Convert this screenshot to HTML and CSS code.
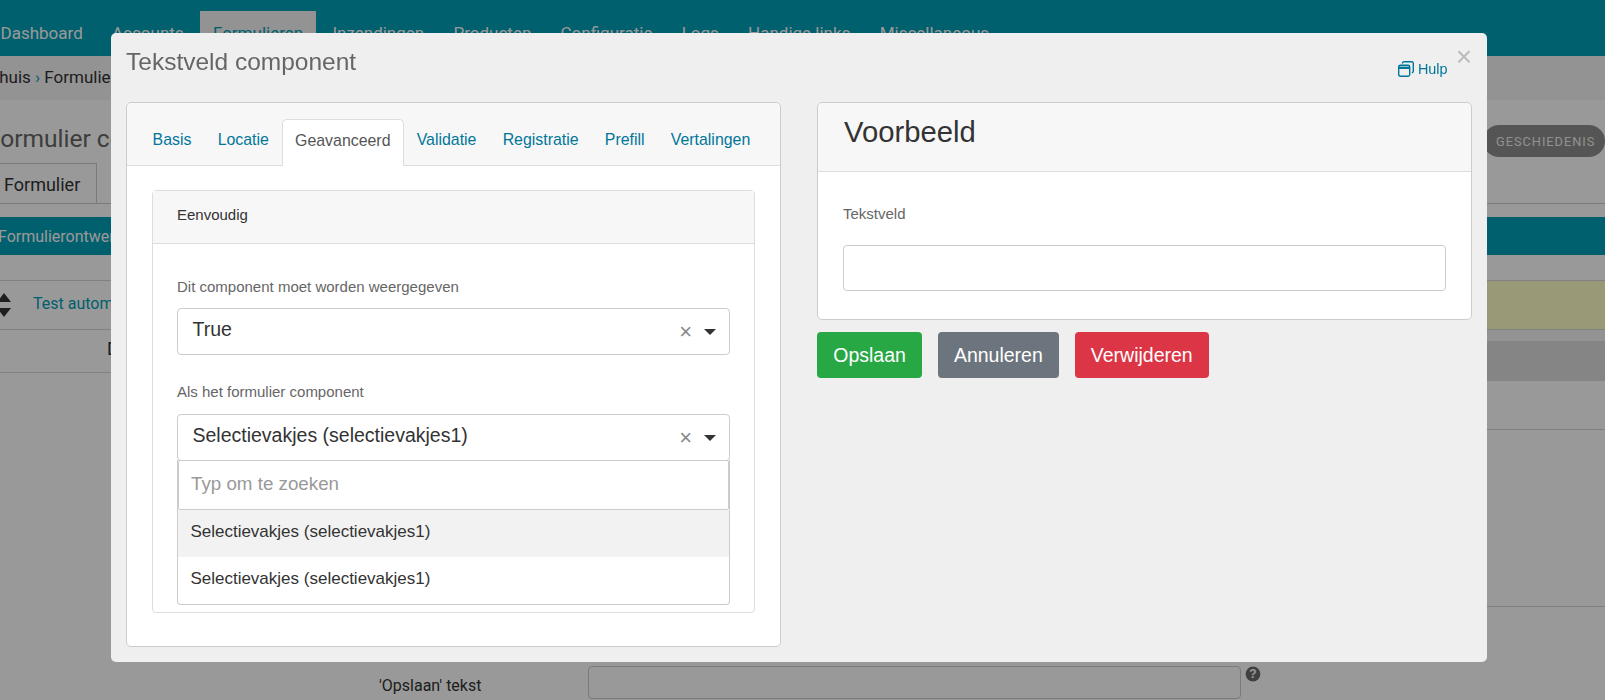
FILE: index.html
```html
<!DOCTYPE html>
<html lang="nl">
<head>
<meta charset="utf-8">
<title>Tekstveld component</title>
<link rel="stylesheet" href="styles.css">
</head>
<body>
<div class="page">
  <nav class="topnav">
    <a>Dashboard</a><a>Accounts</a><a class="active">Formulieren</a><a>Inzendingen</a><a>Producten</a><a>Configuratie</a><a>Logs</a><a>Handige links</a><a>Miscellaneous</a>
  </nav>
  <div class="crumbs">Thuis <span class="sep">›</span> Formulieren</div>
  <div class="titlerow">
    <h1>Formulier configuratie</h1>
    <span class="history">GESCHIEDENIS</span>
  </div>
  <div class="pagetabs"><span class="pagetab">Formulier</span></div>
  <div class="bluebar">Formulierontwerp</div>
  <div class="testrow">
    <span class="sorter"><i class="up"></i><i class="down"></i></span>
    <a class="testlink">Test automatisch</a>
    <span class="yellow"></span>
  </div>
  <div class="split">
    <div class="listcol"><div class="listrow"><span class="box">D</span></div></div>
    <div class="sidecol">
      <div class="sideband"></div>
      <div class="siderow first"></div>
      <div class="siderow second"></div>
    </div>
  </div>
  <div class="saverow">
    <label>'Opslaan' tekst</label>
    <span class="saveinput"></span>
    <svg class="qmark" width="16" height="16" viewBox="0 0 16 16"><circle cx="8" cy="8" r="7.4" fill="#6b6b6b"/><text x="8" y="12.2" text-anchor="middle" class="qtext">?</text></svg>
  </div>
</div>
<div class="backdrop"></div>
<div class="modal">
  <header class="modalhead">
    <h4>Tekstveld component</h4>
    <a class="help">
      <svg width="16" height="16" viewBox="0 0 16 16" fill="none" stroke="#00769a" stroke-width="1.4"><rect x="0.7" y="4.2" width="11" height="11" rx="1.6"/><path d="M0.7 6.8h11" stroke-width="2.4"/><path d="M4.4 2.4V2.2A1.5 1.5 0 0 1 5.9 .7h7.9a1.5 1.5 0 0 1 1.5 1.5v7.9a1.5 1.5 0 0 1-1.5 1.5"/></svg>
      Hulp
    </a>
    <span class="close">×</span>
  </header>
  <div class="modalbody">
    <section class="pane left">
      <ul class="tabs">
        <li>Basis</li><li>Locatie</li><li class="current">Geavanceerd</li><li>Validatie</li><li>Registratie</li><li>Prefill</li><li>Vertalingen</li>
      </ul>
      <div class="tabbody">
        <div class="subcard">
          <div class="subhead">Eenvoudig</div>
          <div class="subbody">
            <label class="lbl">Dit component moet worden weergegeven</label>
            <div class="select">
              <span class="val">True</span>
              <span class="clear">×</span><span class="caret"></span>
            </div>
            <label class="lbl second">Als het formulier component</label>
            <div class="select">
              <span class="val">Selectievakjes (selectievakjes1)</span>
              <span class="clear">×</span><span class="caret"></span>
            </div>
            <div class="dropdown">
              <div class="search">Typ om te zoeken</div>
              <div class="opt hl">Selectievakjes (selectievakjes1)</div>
              <div class="opt">Selectievakjes (selectievakjes1)</div>
            </div>
          </div>
        </div>
      </div>
    </section>
    <div class="right">
      <section class="pane preview">
        <h2>Voorbeeld</h2>
        <div class="previewbody">
          <label class="lbl">Tekstveld</label>
          <div class="input"></div>
        </div>
      </section>
      <div class="actions">
        <button class="btn green">Opslaan</button>
        <button class="btn grey">Annuleren</button>
        <button class="btn red">Verwijderen</button>
      </div>
    </div>
  </div>
</div>
</body>
</html>
```

FILE: styles.css
```css
* { box-sizing: border-box; }
html, body { margin: 0; height: 700px; overflow: hidden; }
body { background: #fff; font-family: Roboto, "Liberation Sans", sans-serif; color: #333; }

/* page behind the dialog */
.page { width: 1605px; height: 700px; overflow: hidden; }
.topnav { height: 56px; background: #00a0b8; padding: 11px 0 0; margin: 0; display: flex; gap: 4.25px; overflow: hidden; }
.topnav a { height: 45px; padding: 10px 12.5px 0; font-size: 17px; line-height: 24px; color: #fff; white-space: nowrap; }
.topnav a:first-child { margin-left: -12px; }
.topnav a.active { background: #f5f5f5; color: #00a0b8; }
.crumbs { height: 44px; background: #f5f5f5; padding: 10px 0 0; margin-left: -11px; font-size: 17px; line-height: 22px; color: #333; white-space: nowrap; }
.sep { color: #00a0b8; }
.titlerow { height: 63px; display: flex; justify-content: space-between; align-items: flex-start; padding-top: 21px; margin-left: -13px; }
.titlerow h1 { margin: 0; font-size: 24.5px; line-height: 36px; font-weight: 400; color: #666; white-space: nowrap; }
.history { background: #8e8e8e; color: #f0f0f0; border-radius: 16px; height: 32px; width: 122px; padding-left: 13px; line-height: 33px; font-size: 12.75px; letter-spacing: 1px; margin: 4px 0 0 0; flex: none; }
.pagetabs { height: 41px; border-bottom: 1px solid #ccc; }
.pagetab { display: block; height: 40px; width: 97px; padding: 9px 0 0 4px; border-top: 1px solid #ccc; border-right: 1px solid #ccc; font-size: 18px; line-height: 24px; }
.bluebar { height: 38px; background: #00a0b8; margin-top: 13px; padding-top: 9px; text-indent: -2px; font-size: 16px; line-height: 22px; color: #fff; white-space: nowrap; }
.testrow { height: 50px; margin-top: 25px; border-top: 1px solid #d8d8d8; border-bottom: 1px solid #d8d8d8; display: flex; align-items: center; position: relative; }
.sorter { width: 34px; height: 24px; margin-left: -3px; margin-right: 2px; display: flex; flex-direction: column; justify-content: space-between; flex: none; }
.sorter i { width: 0; height: 0; border-left: 7px solid transparent; border-right: 7px solid transparent; }
.sorter .up { border-bottom: 9px solid #333; }
.sorter .down { border-top: 9px solid #333; }
.testlink { font-size: 16px; line-height: 20px; padding-bottom: 2px; color: #00a0b8; white-space: nowrap; }
.yellow { position: absolute; right: 0; top: 0; width: 200px; height: 48px; background: #ffffc8; }
.split { display: flex; justify-content: space-between; margin-top: -1px; }
.listcol { width: 1000px; }
.listrow { height: 44px; border-bottom: 1px solid #d8d8d8; padding: 7px 0 0 107px; font-size: 18px; line-height: 26px; }
.sidecol { width: 300px; }
.sideband { height: 52px; background: #dedede; border-top: 12px solid #f5f5f5; }
.siderow { border-bottom: 1px solid #d8d8d8; }
.siderow.first { height: 49px; }
.siderow.second { height: 177px; }
.saverow { display: flex; align-items: flex-start; padding: 59px 0 0 379px; }
.saverow label { width: 209px; font-size: 16px; line-height: 22px; margin-top: 9px; color: #333; white-space: nowrap; }
.saveinput { display: block; width: 653px; height: 33px; border: 1px solid #ccc; border-radius: 4px; background: #fff; flex: none; }
.qmark { margin: 0 0 0 4px; }
.qtext { font: bold 12px "Liberation Sans", sans-serif; fill: #fff; }

.backdrop { position: fixed; inset: 0; background: rgba(0, 0, 0, .4); }

/* dialog */
.modal { position: fixed; left: 111px; top: 33px; width: 1376px; height: 629px; background: #efefef; border-radius: 5px; padding: 0 15px; font-family: "Liberation Sans", Arial, sans-serif; }
.modalhead { height: 69px; position: relative; }
.modalhead h4 { margin: 0; padding-top: 12px; font-size: 24.5px; line-height: 34px; font-weight: 400; color: #666; }
.help { position: absolute; right: 24.5px; top: 27px; display: flex; align-items: center; gap: 4px; font-size: 14.4px; line-height: 18px; color: #00769a; }
.close { position: absolute; right: 0; top: 9px; font: 400 28px/30px "Liberation Sans", sans-serif; color: #bbb; }
.modalbody { display: flex; gap: 36px; }
.pane { background: #fff; border: 1px solid #ccc; border-radius: 5px; width: 655px; }
.left { height: 545px; }
.tabs { list-style: none; margin: 0; height: 63px; padding: 16px 12.5px 0; display: flex; background: #f7f7f7; border-bottom: 1px solid #ddd; border-radius: 5px 5px 0 0; }
.tabs li { height: 47px; padding: 10px 13.1px 0; font-size: 15.9px; line-height: 22px; color: #00769a; white-space: nowrap; }
.tabs li.current { background: #fff; border: 1px solid #ddd; border-bottom: 0; border-radius: 5px 5px 0 0; padding: 10px 12.1px 0; color: #555; }
.tabbody { padding: 24px 25px; }
.subcard { height: 423px; border: 1px solid #ddd; border-radius: 4px; }
.subhead { height: 53px; background: #f7f7f7; border-bottom: 1px solid #ddd; padding: 15px 24px 0; font-size: 15px; line-height: 18px; color: #333; }
.subbody { padding: 33px 24px 0; }
.lbl { display: block; font-size: 15px; line-height: 20px; color: #666; }
.lbl.second { margin-top: 27px; }
.select { margin-top: 11px; height: 47px; border: 1px solid #ccc; border-radius: 4px; display: flex; align-items: center; padding: 0 13px 0 14.5px; }
.lbl.second + .select { margin-top: 12px; }
.val { flex: 1; font-size: 19.5px; line-height: 24px; padding-bottom: 5px; color: #333; }
.clear { font-size: 22px; line-height: 20px; color: #888; margin-right: 12px; }
.caret { width: 0; height: 0; border-left: 6px solid transparent; border-right: 6px solid transparent; border-top: 6px solid #333; }
.dropdown { margin-top: -1px; border: 1px solid #ccc; border-top: 0; border-radius: 0 0 4px 4px; position: relative; }
.search { height: 50px; border: 1px solid #ccc; border-radius: 2px; padding: 11px 12px 0; font-size: 18.75px; line-height: 24px; color: #999; }
.opt { height: 47px; padding: 11px 12.4px 0; font-size: 17px; line-height: 22px; color: #333; }
.opt.hl { background: #f2f2f2; }
.right { width: 655px; }
.preview { height: 218px; }
.preview h2 { margin: 0; height: 69px; background: #f7f7f7; border-bottom: 1px solid #ddd; border-radius: 5px 5px 0 0; padding: 11px 26px 0; font-size: 29.25px; line-height: 36px; font-weight: 400; color: #333; }
.previewbody { padding: 32px 25px 0; }
.input { height: 46px; margin-top: 21px; border: 1px solid #ccc; border-radius: 4px; }
.actions { display: flex; gap: 15.5px; margin-top: 12px; }
.btn { height: 46px; border: 0; border-radius: 4px; padding: 0 16.25px; font: 400 19.5px/24px "Liberation Sans", sans-serif; color: #fff; }
.green { background: #28a745; }
.grey { background: #6c757d; }
.red { background: #dc3545; }
```
